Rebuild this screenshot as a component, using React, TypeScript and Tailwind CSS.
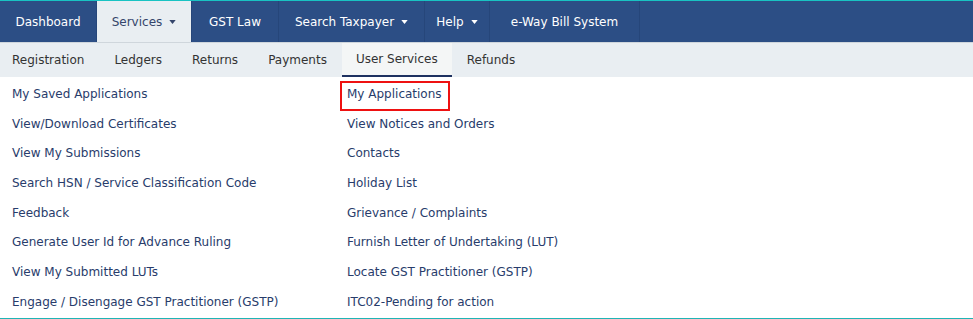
import React from "react";

const topNav = [
  { label: "Dashboard", w: "w-[97px]" },
  { label: "Services", w: "w-[95px]", caret: true, active: true },
  { label: "GST Law", w: "w-[87px]" },
  { label: "Search Taxpayer", w: "w-[146px]", caret: true },
  { label: "Help", w: "w-[65px]", caret: true },
  { label: "e-Way Bill System", w: "w-[150px]" },
];

const subNav = ["Registration", "Ledgers", "Returns", "Payments", "User Services", "Refunds"];

const leftLinks = [
  "My Saved Applications",
  "View/Download Certificates",
  "View My Submissions",
  "Search HSN / Service Classification Code",
  "Feedback",
  "Generate User Id for Advance Ruling",
  "View My Submitted LUTs",
  "Engage / Disengage GST Practitioner (GSTP)",
];

const rightLinks = [
  "My Applications",
  "View Notices and Orders",
  "Contacts",
  "Holiday List",
  "Grievance / Complaints",
  "Furnish Letter of Undertaking (LUT)",
  "Locate GST Practitioner (GSTP)",
  "ITC02-Pending for action",
];

function Caret() {
  return (
    <svg viewBox="0 0 8 5" className="ml-[7px] h-[4px] w-[7px] fill-current">
      <path d="M0 0h8L4 5z" />
    </svg>
  );
}

export default function App() {
  return (
    <div
      className="h-[319px] w-[973px] overflow-hidden border-b border-[#1fb5b5] bg-white text-[12px]"
      style={{ fontFamily: '"DejaVu Sans", Verdana, sans-serif' }}
    >
      <nav className="flex h-[42px] border-t border-[#19c3c3] bg-[#2c4e85]">
        {topNav.map((item) => (
          <div
            key={item.label}
            className={
              item.active
                ? `flex ${item.w} items-center justify-center border-r border-[#26467a] bg-[#e9eef2] pt-[1px] text-[#34456b]`
                : `flex ${item.w} items-center justify-center border-r border-[#26467a] pt-[1px] text-white`
            }
          >
            {item.label}
            {item.caret && <Caret />}
          </div>
        ))}
      </nav>

      <div className="flex h-[35px] border-t border-[#cfd6dc] bg-[#e9eef2] text-[#333]">
        {subNav.map((s, i) => (
          <div
            key={s}
            className={
              s === "User Services"
                ? "flex items-center border-b-2 border-[#1e3160] bg-[#f4f6f6] px-[14px]"
                : i === 0
                  ? "flex items-center pl-[12px] pr-[15px]"
                  : "flex items-center px-[15px]"
            }
          >
            {s}
          </div>
        ))}
      </div>

      <div className="grid grid-cols-[347px_1fr] pt-[2px] text-[#283c6b]">
        <div className="pl-3">
          {leftLinks.map((l) => (
            <div key={l} className="flex h-[29.7px] items-center">
              {l}
            </div>
          ))}
        </div>
        <div>
          {rightLinks.map((l, i) => (
            <div key={l} className="flex h-[29.7px] items-center">
              {i === 0 ? (
                <span className="relative">
                  {l}
                  <span className="absolute -left-[7px] -right-[8px] -top-[4px] -bottom-[8px] border-2 border-[#ee1111]" />
                </span>
              ) : (
                l
              )}
            </div>
          ))}
        </div>
      </div>
    </div>
  );
}
